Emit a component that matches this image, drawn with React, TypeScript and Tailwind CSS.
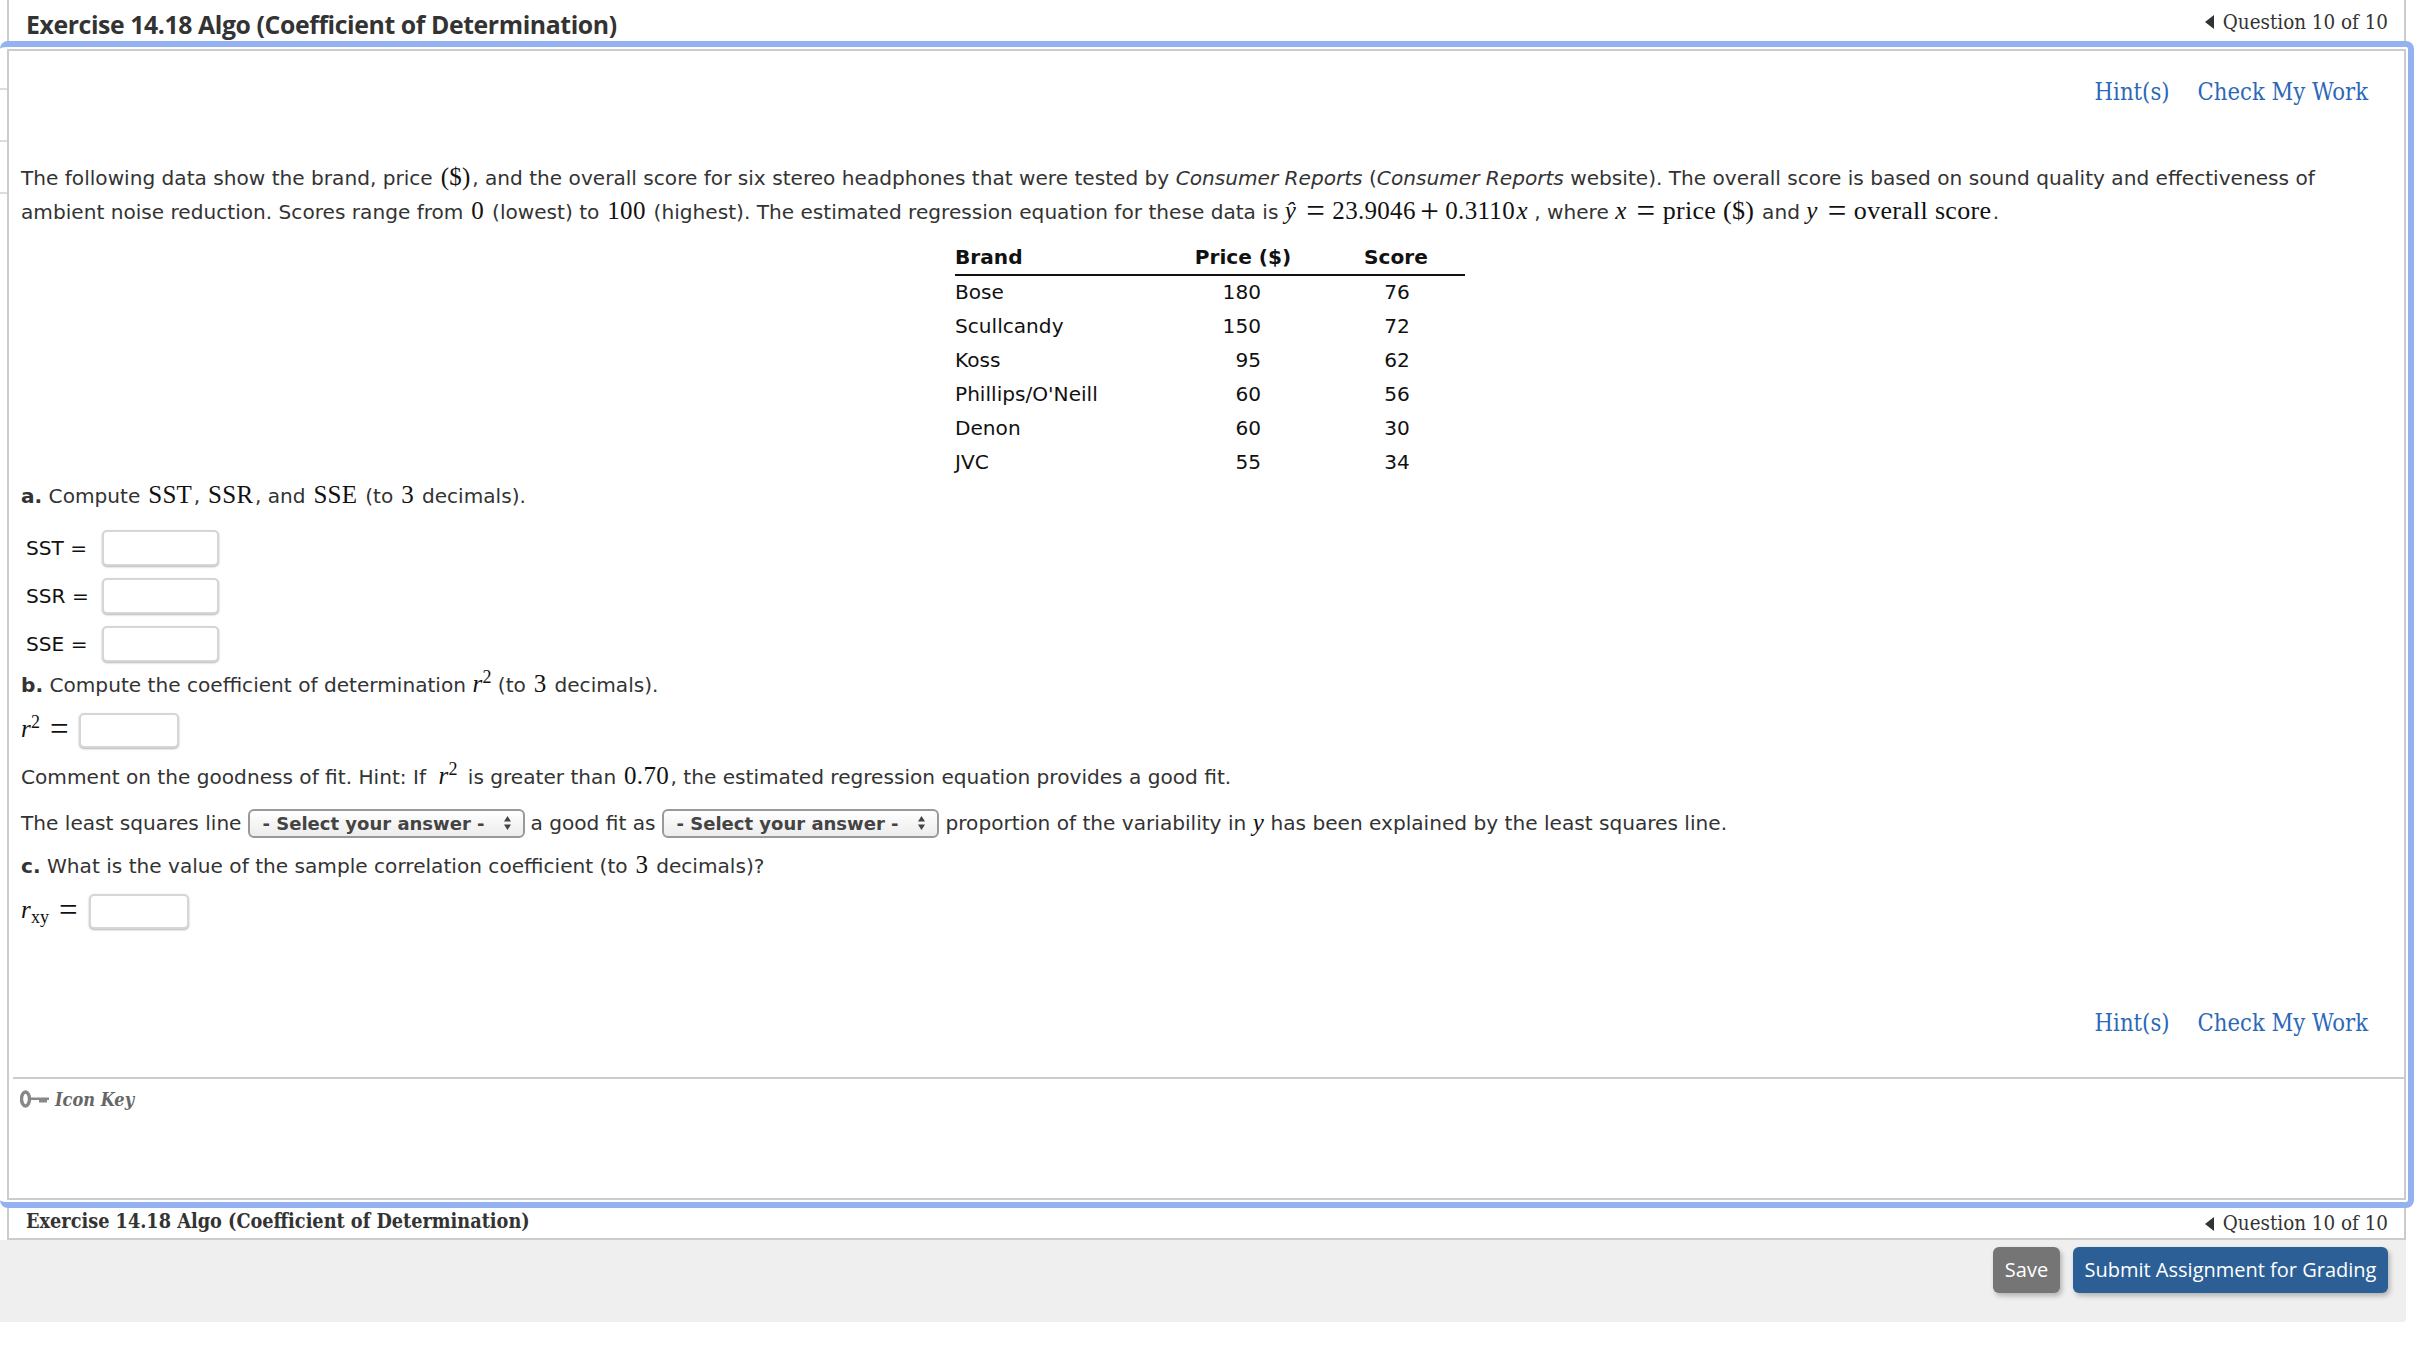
import React from 'react';

const BODY = "font-['DejaVu_Sans',sans-serif]";
const SERIF = "font-['DejaVu_Serif',serif] font-stretch-condensed";
const MATH = "font-['Liberation_Serif',serif] text-[25px] leading-[0] tracking-[0.3px] text-[#111]";

const M = ({ children }: { children: React.ReactNode }) => (
  <span className={`${MATH} mx-[1.5px]`}>{children}</span>
);

// words set upright in a formula run a little wider
const W = ({ children }: { children: React.ReactNode }) => (
  <span className="font-['Liberation_Serif',serif] text-[26px] leading-[0] text-[#111]">{children}</span>
);

const V = ({ children }: { children: React.ReactNode }) => (
  <span className={`${MATH} italic`}>{children}</span>
);

// operators are wider in the math font of the page
const Op = ({ children }: { children: React.ReactNode }) => (
  <span className="ml-[10px] mr-[6px] align-[-3px] font-['Liberation_Serif',serif] text-[33px] leading-[0] text-[#111]">
    {children}
  </span>
);

const Plus = () => (
  <span className="ml-[3px] mr-[5px] align-[-3px] font-['Liberation_Serif',serif] text-[33px] leading-[0] text-[#111]">
    +
  </span>
);

const Sq = () => (
  <span className="text-[#111]">
    <V>r</V>
    <sup className="font-['Liberation_Serif',serif] text-[18px] leading-none">2</sup>
  </span>
);

const HintLinks = () => (
  <div className={`flex h-[83px] items-center justify-end gap-[28px] pr-[36px] text-[23.6px] text-[#2b68b8] ${SERIF}`}>
    <a>Hint(s)</a>
    <a>Check My Work</a>
  </div>
);

const QuestionNo = ({ className }: { className: string }) => (
  <div className={`flex items-center gap-[9px] text-[20.4px] text-[#333] ${SERIF} ${className}`}>
    <span className="h-0 w-0 border-y-[7px] border-r-[9px] border-y-transparent border-r-[#333]" />
    Question 10 of 10
  </div>
);

const AnswerBox = ({ className }: { className: string }) => (
  <input
    className={`block rounded-[5px] border-2 border-[#d6d6d6] bg-white shadow-[0_1px_2px_rgba(0,0,0,0.3)] ${className}`}
  />
);

const SelectBox = ({ className }: { className: string }) => (
  <div
    className={`flex h-[29px] items-center justify-between rounded-[6px] border-2 border-[#999] bg-gradient-to-b from-white to-[#ececec] pl-[13px] pr-[11px] text-[18px] font-bold text-[#444] ${className}`}
  >
    - Select your answer -
    <svg width="9" height="16" viewBox="0 0 9 16">
      <path d="M4.5 1 8 6.5H1zM4.5 15 1 9.5h7z" fill="#444" />
    </svg>
  </div>
);

const ROWS = [
  ['Bose', '180', '76'],
  ['Scullcandy', '150', '72'],
  ['Koss', '95', '62'],
  ["Phillips/O'Neill", '60', '56'],
  ['Denon', '60', '30'],
  ['JVC', '55', '34'],
];

const App = () => {
  return (
    <div className={`relative h-[1354px] w-[2425px] overflow-hidden bg-white ${BODY} text-[20.13px] text-[#333]`}>
      {/* little ticks left of the frame */}
      <div className="absolute left-0 top-[88px] h-[2px] w-[7px] bg-[#ddd]" />
      <div className="absolute left-0 top-[140px] h-[2px] w-[7px] bg-[#ddd]" />
      <div className="absolute left-0 top-[192px] h-[2px] w-[7px] bg-[#ddd]" />

      <header className="ml-[7px] flex h-[41px] w-[2399px] items-center justify-between border-x-2 border-[#ccc] pl-[17px] pr-[16px]">
        <h1 className="pt-[8px] font-['Open_Sans',sans-serif] text-[24.8px] font-bold tracking-[-0.4px] text-[#333]">
          Exercise 14.18 Algo (Coefficient of Determination)
        </h1>
        <QuestionNo className="pt-[3px]" />
      </header>

      <div className="h-[1167px] w-[2414px] rounded-[8px] border-y-[6px] border-r-[6px] border-[#94b1f1] py-[2px] pl-[7px] pr-[2px]">
        <div className="flex h-full flex-col border-2 border-[#ccc] pl-[12px]">
          <HintLinks />

          <p className="mt-[27px] whitespace-nowrap leading-[34px]">
            The following data show the brand, price <M>($)</M>, and the overall score for six stereo headphones that were tested by <i>Consumer Reports</i> (<i>Consumer Reports</i> website). The overall score is based on sound quality and effectiveness of
            <br />
            ambient noise reduction. Scores range from <M>0</M> (lowest) to <M>100</M> (highest). The estimated regression equation for these data is <V>ŷ</V><Op>=</Op><M>23.9046</M><Plus /><M>0.3110</M><V>x</V> , where <V>x</V><Op>=</Op><M><W>price ($)</W></M> and <V>y</V><Op>=</Op><M><W>overall score</W></M>.
          </p>

          <table className="ml-[934px] mt-[12px] w-[510px] table-fixed border-collapse text-[#111]">
            <thead>
              <tr className="h-[34px] border-b-2 border-[#111] font-bold">
                <th className="w-[230px] text-left">Brand</th>
                <th className="w-[116px] text-center">Price ($)</th>
                <th className="pl-[26px] text-center">Score</th>
              </tr>
            </thead>
            <tbody>
              {ROWS.map(([brand, price, score]) => (
                <tr key={brand} className="h-[34px]">
                  <td>{brand}</td>
                  <td className="pr-[40px] text-right">{price}</td>
                  <td className="pl-[28px] text-center">{score}</td>
                </tr>
              ))}
            </tbody>
          </table>

          <p className="leading-[34px]">
            <b>a.</b> Compute <M>SST</M>, <M>SSR</M>, and <M>SSE</M> (to <M>3</M> decimals).
          </p>

          <div className="mt-[17px] flex flex-col gap-[12px] pl-[5px] text-[#111]">
            {['SST', 'SSR', 'SSE'].map((name) => (
              <div key={name} className="flex h-[36px] items-center">
                <span className="w-[76px]">{name} =</span>
                <AnswerBox className="h-[36px] w-[117px]" />
              </div>
            ))}
          </div>

          <p className="mt-[6px] leading-[34px]">
            <b>b.</b> Compute the coefficient of determination <Sq /> (to <M>3</M> decimals).
          </p>

          <div className="mt-[11px] flex h-[35px] items-center">
            <span className="w-[58px] whitespace-nowrap">
              <Sq /><Op>=</Op>
            </span>
            <AnswerBox className="h-[35px] w-[100px]" />
          </div>

          <p className="mt-[12px] leading-[34px]">
            Comment on the goodness of fit. Hint: If <span className="ml-[6px] mr-[4px]"><Sq /></span> is greater than <M>0.70</M>, the estimated regression equation provides a good fit.
          </p>

          <div className="mt-[12px] flex h-[34px] items-center whitespace-nowrap">
            The least squares line
            <SelectBox className="mx-[6px] w-[277px]" />
            a good fit as
            <SelectBox className="ml-[6px] mr-[7px] w-[277px]" />
            proportion of the variability in&nbsp;<V>y</V>&nbsp;has been explained by the least squares line.
          </div>

          <p className="mt-[9px] leading-[34px]">
            <b>c.</b> What is the value of the sample correlation coefficient (to <M>3</M> decimals)?
          </p>

          <div className="mt-[11px] flex h-[35px] items-center">
            <span className="w-[68px] whitespace-nowrap">
              <V>r</V>
              <sub className="font-['Liberation_Serif',serif] text-[18px] leading-none text-[#111]">xy</sub><Op>=</Op>
            </span>
            <AnswerBox className="h-[35px] w-[100px]" />
          </div>

          <div className="mt-[53px]">
            <HintLinks />
          </div>

          <div className="-ml-[8px] mt-[12px] h-[2px] bg-[#ccc]" />

          <div className={`-ml-[1px] flex h-[40px] items-center gap-[6px] text-[18px] font-bold italic text-[#666] ${SERIF}`}>
            <svg width="29" height="18" viewBox="0 0 29 18" className="shrink-0">
              <ellipse cx="5.5" cy="9" rx="4" ry="7" fill="none" stroke="#888" strokeWidth="3.4" />
              <path d="M9 7.5h20v2.6H9zM19 10h8v2.6h-8z" fill="#888" />
            </svg>
            Icon Key
          </div>
        </div>
      </div>

      <div className="ml-[7px] flex h-[32px] w-[2399px] items-center justify-between border-x-2 border-b-2 border-[#ccc] pl-[17px] pr-[16px]">
        <h2 className={`-mt-[2px] text-[19.7px] font-bold text-[#333] ${SERIF}`}>
          Exercise 14.18 Algo (Coefficient of Determination)
        </h2>
        <QuestionNo className="pt-[1px]" />
      </div>

      <footer className="flex h-[82px] w-[2406px] items-start justify-end gap-[13px] rounded-br-[4px] bg-[#efefef] pr-[18px] pt-[7px] font-['Open_Sans',sans-serif] text-[20px] text-white">
        <button className="h-[46px] w-[67px] rounded-[6px] bg-[#757575] shadow-[2px_3px_5px_rgba(0,0,0,0.25)]">
          Save
        </button>
        <button className="h-[46px] w-[315px] rounded-[6px] bg-[#2c5f95] shadow-[2px_3px_5px_rgba(0,0,0,0.25)]">
          Submit Assignment for Grading
        </button>
      </footer>
    </div>
  );
};

export default App;
